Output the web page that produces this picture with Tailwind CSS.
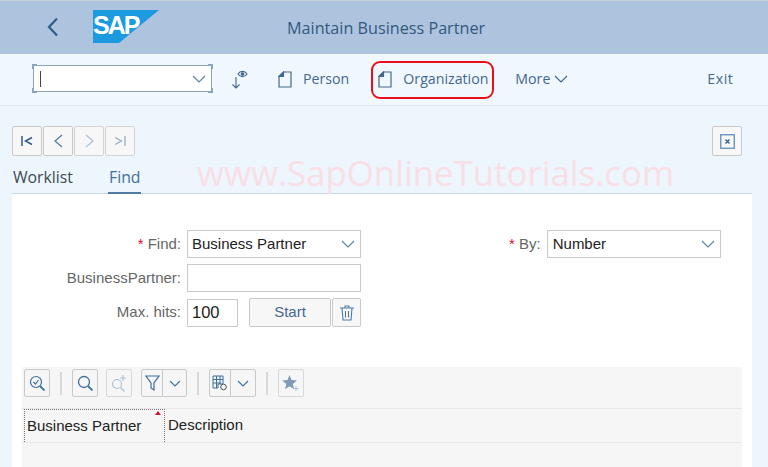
<!DOCTYPE html>
<html lang="en">

<head>
  <meta charset="UTF-8">
  <title>Maintain Business Partner</title>
  <script src="https://cdn.jsdelivr.net/npm/@tailwindcss/browser@4"></script>
</head>

<body class="relative w-[768px] h-[467px] overflow-hidden bg-[#edf5fd] font-['Liberation_Sans',sans-serif]">
  <!-- Shell header -->
  <header class="flex items-center h-[54px] border-t border-[#c4ccd6] bg-[#aec4de] pb-[1px]">
    <svg class="ml-[46px] w-[14px] h-[20px]" viewBox="0 0 14 20" fill="none" stroke="#2f5d8a" stroke-width="2.2">
      <path d="M11 1.500 3 10l8 8.500" />
    </svg>
    <div class="relative ml-[33px] mb-[1px] w-[66px] h-[33px]">
      <svg class="w-[66px] h-[33px]" viewBox="0 0 66 33">
        <path d="M0 0H66L26 33H0Z" fill="#1b9ae0" />
      </svg>
      <span class="absolute left-0 top-[-1px] font-bold text-[25px] leading-[33px] tracking-[-2px] text-white">SAP</span>
    </div>
    <h1 class="ml-[128px] mt-[2px] font-['Open_Sans',sans-serif] text-[16.200px] text-[#33587f]">Maintain Business Partner</h1>
  </header>

  <!-- Toolbar -->
  <div class="flex items-center h-[52px] border-b border-[#dfe9f3] bg-[#f0f7fe] pb-[1px] font-['Open_Sans',sans-serif] text-[14.200px] text-[#44688e]">
    <div class="relative ml-[33px] mb-[1px] flex items-center justify-between w-[179px] h-[27px] border border-[#8aa4bf] bg-white pl-[6px] pr-[5px]">
      <span class="w-px h-[16px] bg-[#444]"></span>
      <svg class="w-[14px] h-[8px]" viewBox="0 0 14 8" fill="none" stroke="#5d84ab" stroke-width="1.200"><path d="m1 1 6 6 6-6" /></svg>
      <span class="absolute -left-[2px] -top-[2px] w-[5px] h-[5px] border-l-2 border-t-2 border-[#8aa4bf]"></span>
      <span class="absolute -right-[2px] -top-[2px] w-[5px] h-[5px] border-r-2 border-t-2 border-[#8aa4bf]"></span>
      <span class="absolute -left-[2px] -bottom-[2px] w-[5px] h-[5px] border-l-2 border-b-2 border-[#8aa4bf]"></span>
      <span class="absolute -right-[2px] -bottom-[2px] w-[5px] h-[5px] border-r-2 border-b-2 border-[#8aa4bf]"></span>
    </div>
    <svg class="ml-[18px] w-[20px] h-[19px]" viewBox="0 0 20 19" fill="none" stroke="#44688e" stroke-width="1.100">
      <path d="M6 7v11M2.500 14.500 6 18l3.500-3.500" />
      <path d="M8 4c2-3.500 7-3.500 9 0-2 3.500-7 3.500-9 0Z" />
      <circle cx="12.500" cy="4" r="1.300" fill="#44688e" />
    </svg>
    <svg class="ml-[28px] w-[14px] h-[17px]" viewBox="0 0 14 17" fill="none" stroke="#44688e" stroke-width="1.200">
      <path d="M1 5.500 5.500 1H13V16H1Z" />
      <path d="M1 5.500 5.500 1V5.500Z" fill="#44688e" />
    </svg>
    <span class="ml-[11px]">Person</span>
    <div class="ml-[22px] mt-[1px] flex items-center h-[38px] w-[123px] rounded-[9px] border-[2px] border-[#e8101c] pb-[1px] pl-[5px]">
      <svg class="w-[14px] h-[17px]" viewBox="0 0 14 17" fill="none" stroke="#44688e" stroke-width="1.200">
        <path d="M1 5.500 5.500 1H13V16H1Z" />
        <path d="M1 5.500 5.500 1V5.500Z" fill="#44688e" />
      </svg>
      <span class="ml-[11px]">Organization</span>
    </div>
    <span class="ml-[21px]">More</span>
    <svg class="ml-[4px] w-[14px] h-[8px]" viewBox="0 0 14 8" fill="none" stroke="#44688e" stroke-width="1.200"><path d="m1 1 6 6 6-6" /></svg>
    <span class="ml-[139px] tracking-[0.5px]">Exit</span>
  </div>

  <!-- Page navigation -->
  <div class="flex justify-between h-[31px] mt-[20px] pl-[12px] pr-[26px]">
    <div class="flex gap-[1px]">
      <button class="flex items-center justify-center w-[30px] h-[30px] rounded-[2px] border border-[#c9c9c9] bg-[#f7f7f7]">
        <svg class="w-[12px] h-[10px]" viewBox="0 0 12 10" fill="none" stroke="#2f5d8a" stroke-width="1.500"><path d="M1 0v10M11 1.500 4.500 5l6.500 3.500" /></svg>
      </button>
      <button class="flex items-center justify-center w-[30px] h-[30px] rounded-[2px] border border-[#c9c9c9] bg-[#f7f7f7]">
        <svg class="w-[9px] h-[14px]" viewBox="0 0 9 14" fill="none" stroke="#4c7ba8" stroke-width="1.200"><path d="M8 1 1 7l7 6" /></svg>
      </button>
      <button class="flex items-center justify-center w-[30px] h-[30px] rounded-[2px] border border-[#d3d3d3] bg-[#f7f7f7]">
        <svg class="w-[9px] h-[14px]" viewBox="0 0 9 14" fill="none" stroke="#a9c0d6" stroke-width="1.200"><path d="m1 1 7 6-7 6" /></svg>
      </button>
      <button class="flex items-center justify-center w-[30px] h-[30px] rounded-[2px] border border-[#d3d3d3] bg-[#f7f7f7]">
        <svg class="w-[12px] h-[10px]" viewBox="0 0 12 10" fill="none" stroke="#93aec8" stroke-width="1.300"><path d="M11 0v10M1 1.500 7.500 5 1 8.500" /></svg>
      </button>
    </div>
    <button class="flex items-center justify-center w-[30px] h-[30px] rounded-[2px] border border-[#c9c9c9] bg-[#f7f7f7]">
      <svg class="w-[15px] h-[15px]" viewBox="0 0 15 15" fill="none"><rect x=".75" y=".75" width="13.500" height="13.500" stroke="#5d8fbf" stroke-width="1.300" /><path d="m5.500 5.500 4 4m0-4-4 4" stroke="#2f5d8a" stroke-width="1.300" /></svg>
    </button>
  </div>

  <!-- Tabs -->
  <div class="flex h-[36px] mt-[1px] mx-[12px] w-[740px] border-b border-[#c6d9e8] pt-[8px] font-['Open_Sans',sans-serif] text-[15.800px]">
    <span class="ml-[1px] text-[#3f4a55]">Worklist</span>
    <span class="relative ml-[36px] text-[#44709c]">Find<span class="absolute -left-[1px] -right-[1px] top-[26px] h-[2px] bg-[#4f7aa5]"></span></span>
  </div>

  <!-- Search panel -->
  <main class="ml-[12px] w-[740px] h-[273px] bg-white pt-[36px] text-[15px] text-[#666]">
    <div class="flex">
      <div class="grid grid-cols-[169px_174px] gap-x-[6px] gap-y-[6px] items-center w-[349px]">
        <label class="text-right"><span class="text-[#d2142a]">* </span>Find:</label>
        <div class="flex items-center justify-between h-[28px] border border-[#c9c9c9] pl-[4px] pr-[5px] text-[#222]">
          Business Partner
          <svg class="w-[14px] h-[8px]" viewBox="0 0 14 8" fill="none" stroke="#5d84ab" stroke-width="1.200"><path d="m1 1 6 6 6-6" /></svg>
        </div>
        <label class="text-right">BusinessPartner:</label>
        <div class="h-[28px] border border-[#c9c9c9]"></div>
        <label class="text-right">Max. hits:</label>
        <div class="flex items-center">
          <div class="flex items-center w-[51px] h-[28px] border border-[#c9c9c9] pl-[4px] text-[16.500px] text-[#222]">100</div>
          <button class="ml-[11px] w-[82px] h-[29px] rounded-[2px] border border-[#c9c9c9] bg-[#f7f7f7] text-[#44688e]">Start</button>
          <button class="ml-[1px] flex items-center justify-center w-[29px] h-[29px] rounded-[2px] border border-[#c9c9c9] bg-[#f7f7f7]">
            <svg class="w-[14px] h-[16px]" viewBox="0 0 14 16" fill="none" stroke="#4c7ba8" stroke-width="1.100"><path d="M0 3h14M5 3V1h4v2M2 3l1 12h8l1-12M5.500 6v6.500M8.500 6v6.500" /></svg>
          </button>
        </div>
      </div>
      <div class="ml-[148px] flex items-start gap-[6px]">
        <label class="leading-[28px]"><span class="text-[#d2142a]">* </span>By:</label>
        <div class="flex items-center justify-between w-[174px] h-[28px] border border-[#c9c9c9] pl-[5px] pr-[5px] text-[#222]">
          Number
          <svg class="w-[14px] h-[8px]" viewBox="0 0 14 8" fill="none" stroke="#5d84ab" stroke-width="1.200"><path d="m1 1 6 6 6-6" /></svg>
        </div>
      </div>
    </div>

    <!-- Results table -->
    <section class="mt-[40px] ml-[10px] w-[720px] h-[100px] bg-[#f6f6f6]">
      <div class="flex items-start h-[42px] border-b border-[#ebe6eb] pt-[2px] pl-[2px]">
        <button class="flex items-center justify-center w-[26px] h-[28px] rounded-[2px] border border-[#c9c9c9]">
          <svg class="w-[16px] h-[16px]" viewBox="0 0 16 16" fill="none" stroke="#3d6f9f" stroke-width="1.200"><circle cx="7" cy="7" r="5.500" /><path d="m11 11 4.500 4.500" stroke-width="1.800" /><path d="m4.500 7 2 2 3-4" /></svg>
        </button>
        <span class="mt-[3px] mx-[10px] w-[2px] h-[23px] bg-[#d8d8d8]"></span>
        <button class="flex items-center justify-center w-[26px] h-[28px] rounded-[2px] border border-[#c9c9c9]">
          <svg class="w-[16px] h-[16px]" viewBox="0 0 16 16" fill="none" stroke="#3d6f9f" stroke-width="1.300"><circle cx="7" cy="7" r="5.500" /><path d="m11 11 4.500 4.500" stroke-width="1.800" /></svg>
        </button>
        <button class="ml-[8px] flex items-center justify-center w-[26px] h-[28px] rounded-[2px] border border-[#d8d8d8]">
          <svg class="w-[18px] h-[18px]" viewBox="0 0 18 18" fill="none" stroke="#a9c0d6" stroke-width="1.100"><circle cx="7" cy="10" r="4.500" /><path d="m10.500 13.500 4 4M13 1v6M10 4h6" /></svg>
        </button>
        <div class="ml-[9px] flex h-[28px] w-[46px] rounded-[2px] border border-[#c9c9c9]">
          <span class="flex items-center justify-center w-[21px] border-r border-[#c9c9c9]">
            <svg class="w-[15px] h-[16px]" viewBox="0 0 15 16" fill="none" stroke="#3d6f9f" stroke-width="1.200"><path d="M1 1h13L9 8v7l-3-2V8Z" /></svg>
          </span>
          <span class="flex flex-1 items-center justify-center">
            <svg class="w-[12px] h-[7px]" viewBox="0 0 12 7" fill="none" stroke="#3d6f9f" stroke-width="1.100"><path d="m1 1 5 5 5-5" /></svg>
          </span>
        </div>
        <span class="mt-[3px] mx-[10px] w-[2px] h-[23px] bg-[#d8d8d8]"></span>
        <div class="flex h-[28px] w-[47px] rounded-[2px] border border-[#c9c9c9]">
          <span class="flex items-center justify-center w-[21px] border-r border-[#c9c9c9]">
            <svg class="w-[16px] h-[16px]" viewBox="0 0 16 16" fill="none" stroke="#3d6f9f" stroke-width="1"><path d="M1 1h10v8H6v4H1ZM1 4.500h10M1 8h8M4.500 1v12M8 1v8" /><circle cx="11.500" cy="12" r="2.800" stroke="#555" /></svg>
          </span>
          <span class="flex flex-1 items-center justify-center">
            <svg class="w-[12px] h-[7px]" viewBox="0 0 12 7" fill="none" stroke="#3d6f9f" stroke-width="1.100"><path d="m1 1 5 5 5-5" /></svg>
          </span>
        </div>
        <span class="mt-[3px] mx-[10px] w-[2px] h-[23px] bg-[#d8d8d8]"></span>
        <button class="flex items-center justify-center w-[26px] h-[28px] rounded-[2px] border border-[#d8d8d8]">
          <svg class="w-[18px] h-[18px]" viewBox="0 0 18 18"><path d="m7.500 1 2 5 5.500.4-4.200 3.500 1.400 5.300L7.500 12.300 3 15.200l1.400-5.300L.2 6.400 5.600 6Z" fill="#7f98b3" /><path d="M14 12v5M11.500 14.500h5" stroke="#a9c0d6" /></svg>
        </button>
      </div>
      <div class="flex h-[34px] border-b border-[#ebe6eb] text-[#222]">
        <div class="relative flex items-center w-[141px] ml-[2px] pl-[2px] border-x border-t border-dotted border-[#777]">
          Business Partner
          <span class="absolute right-[3px] top-[1px] w-0 h-0 border-x-[3px] border-b-[4px] border-x-transparent border-b-[#d2142a]"></span>
        </div>
        <div class="flex items-center pl-[3px]">Description</div>
      </div>
    </section>
  </main>

  <!-- Watermark -->
  <div class="absolute left-[197px] top-[147px] font-['Open_Sans',sans-serif] text-[34.800px] text-[#f9dfe5]">www.SapOnlineTutorials.com</div>
</body>

</html>
